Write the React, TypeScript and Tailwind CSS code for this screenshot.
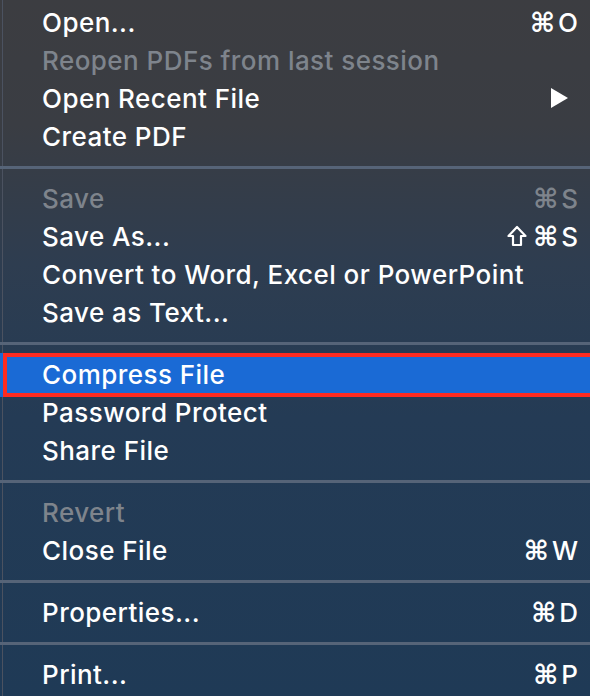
import React from 'react'

type Item = {
  label: string
  shortcut?: string
  disabled?: boolean
  submenu?: boolean
  selected?: boolean
}

const sections: Item[][] = [
  [
    { label: 'Open...', shortcut: 'O' },
    { label: 'Reopen PDFs from last session', disabled: true },
    { label: 'Open Recent File', submenu: true },
    { label: 'Create PDF' },
  ],
  [
    { label: 'Save', shortcut: 'S', disabled: true },
    { label: 'Save As...', shortcut: '⇧S' },
    { label: 'Convert to Word, Excel or PowerPoint' },
    { label: 'Save as Text...' },
  ],
  [
    { label: 'Compress File', selected: true },
    { label: 'Password Protect' },
    { label: 'Share File' },
  ],
  [
    { label: 'Revert', disabled: true },
    { label: 'Close File', shortcut: 'W' },
  ],
  [{ label: 'Properties...', shortcut: 'D' }],
  [{ label: 'Print...', shortcut: 'P' }],
]

function Shortcut({ keys, disabled }: { keys: string; disabled?: boolean }) {
  const shift = keys.startsWith('⇧')
  const letter = shift ? keys.slice(1) : keys
  return (
    <span className={`flex items-center ${disabled ? 'text-[#7e848c]' : 'text-white'}`}>
      {shift && (
        <svg width="20" height="22" viewBox="0 0 20 22" className="mr-[6px]">
          <path
            d="M10 2 L1.5 11 H6 V20 H14 V11 H18.5 Z"
            fill="none"
            stroke="currentColor"
            strokeWidth="2.2"
            strokeLinejoin="round"
          />
        </svg>
      )}
      <span className="font-['DejaVu_Sans',sans-serif] text-[27px] font-bold leading-none">⌘</span>
      <span className="ml-[3px]">{letter}</span>
    </span>
  )
}

function Row({ item }: { item: Item }) {
  return (
    <div className="relative flex h-[38px] items-center justify-between pl-[39px] pr-[12px]">
      {item.selected && (
        <>
          <div className="absolute inset-x-0 -top-[2px] -bottom-[4px] -ml-[3px] bg-[#1a6ad5]" />
          <div className="absolute left-0 -right-[4px] -top-[2px] -bottom-[4px] border-4 border-[#ff2b20]" />
        </>
      )}
      <span className={`relative ${item.disabled ? 'text-[#7e848c]' : 'text-white'}`}>
        {item.label}
      </span>
      {item.shortcut && (
        <span className="relative tracking-normal">
          <Shortcut keys={item.shortcut} disabled={item.disabled} />
        </span>
      )}
      {item.submenu && (
        <svg width="18" height="20" viewBox="0 0 18 20" className="relative mr-[9px]">
          <path d="M0 0 L17 10 L0 20 Z" fill="white" />
        </svg>
      )}
    </div>
  )
}

export default function App() {
  return (
    <div className="h-[696px] w-[590px] overflow-hidden bg-[linear-gradient(180deg,#3c3d41_0%,#3a3d43_18%,#2e3d50_38%,#243b55_60%,#1f3a56_100%)] pl-[2px] font-['Inter',sans-serif] text-[26px] font-medium tracking-[0.45px]">
      <div className="h-full border-l border-[#4b5260] pt-[3px]">
        {sections.map((section, i) => (
          <div key={i}>
            {i > 0 && (
              <div className="-ml-[3px] pt-[11px] pb-[10px]">
                <div className="h-[3px] bg-[#566478]" />
              </div>
            )}
            {section.map((item) => (
              <Row key={item.label} item={item} />
            ))}
          </div>
        ))}
      </div>
    </div>
  )
}
